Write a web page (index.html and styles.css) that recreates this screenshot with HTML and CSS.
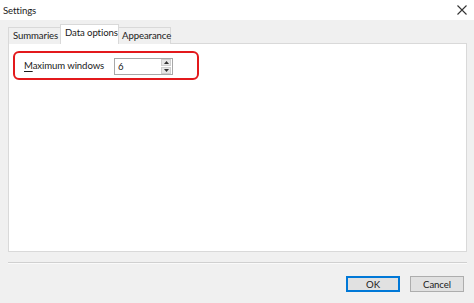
FILE: index.html
```html
<!DOCTYPE html>
<html>
<head>
<meta charset="utf-8">
<link rel="stylesheet" href="styles.css">
</head>
<body>
<div class="window">
  <div class="titlebar">
    <span class="title">Settings</span>
    <svg class="close" width="10" height="10" viewBox="0 0 10 10"><path d="M0.5 0.5L9.5 9.5M9.5 0.5L0.5 9.5" stroke="#333" stroke-width="1.1" fill="none"/></svg>
  </div>
  <div class="body">
    <div class="tabs">
      <div class="tab first">Summaries</div>
      <div class="tab active">Data options</div>
      <div class="tab">Appearance</div>
    </div>
    <div class="panel">
      <div class="highlight">
        <label class="label"><u>M</u>aximum windows</label>
        <div class="spin">
          <span class="value">6</span>
          <div class="spinbtns">
            <div class="sb"><svg width="5" height="3" viewBox="0 0 5 3"><path d="M0 3L2.5 0L5 3Z" fill="#333"/></svg></div>
            <div class="sb"><svg width="5" height="3" viewBox="0 0 5 3"><path d="M0 0L2.5 3L5 0Z" fill="#333"/></svg></div>
          </div>
        </div>
      </div>
    </div>
    <div class="separator"></div>
    <div class="buttons">
      <div class="btn default">OK</div>
      <div class="btn">Cancel</div>
    </div>
  </div>
</div>
</body>
</html>
```
FILE: styles.css
```css
html, body {
  margin: 0;
  padding: 0;
}
body {
  width: 474px;
  height: 303px;
  overflow: hidden;
  font-family: Lato, "Noto Sans", sans-serif;
  font-size: 9.6px;
  letter-spacing: -0.1px;
  color: #1a1a1a;
  white-space: nowrap;
}
.window {
  width: 474px;
  height: 303px;
  display: flex;
  flex-direction: column;
}
.titlebar {
  height: 20px;
  background: #fff;
  display: flex;
  align-items: center;
  justify-content: space-between;
  padding: 0 7px 0 3px;
  box-sizing: border-box;
}
.close {
  margin-top: -1px;
}
.body {
  flex: 1;
  background: #f0f0f0;
  padding: 4px 7px 0 8px;
  display: flex;
  flex-direction: column;
}
.tabs {
  display: flex;
  align-items: flex-end;
  height: 20px;
  margin-bottom: -1px;
  position: relative;
  z-index: 1;
}
.tab {
  height: 17px;
  box-sizing: border-box;
  border: 1px solid #d9d9d9;
  border-bottom: none;
  background: #f0f0f0;
  padding: 0 0 0 4px;
  display: flex;
  align-items: center;
  line-height: 1;
  margin-left: -1px;
}
.tab.first {
  margin-left: 0;
  width: 53px;
}
.tab.active {
  height: 20px;
  background: #fff;
  width: 59px;
  padding-bottom: 3px;
}
.tab:last-child {
  width: 53px;
  padding-left: 3px;
}
.panel {
  height: 209px;
  box-sizing: border-box;
  background: #fff;
  border: 1px solid #d9d9d9;
  padding: 7px 0 0 4px;
}
.highlight {
  width: 186px;
  height: 29px;
  box-sizing: border-box;
  border: 2px solid #e3191c;
  border-radius: 6px;
  display: flex;
  align-items: center;
  padding-left: 9px;
}
.label {
  width: 90px;
}
.label u {
  text-decoration-thickness: 1px;
  text-underline-offset: 2px;
}
.spin {
  width: 59px;
  height: 17px;
  box-sizing: border-box;
  border: 1px solid #a8a8a8;
  background: #fff;
  display: flex;
  align-items: center;
  justify-content: space-between;
  padding-left: 3px;
  margin-top: 1px;
}
.spinbtns {
  width: 10px;
  height: 15px;
  display: flex;
  flex-direction: column;
  gap: 1px;
  margin-right: 1px;
}
.sb {
  flex: 1;
  background: #e6e6e6;
  border: 1px solid #cfcfcf;
  box-sizing: border-box;
  display: flex;
  align-items: center;
  justify-content: center;
}
.separator {
  margin-top: 10px;
  height: 1px;
  background: #d0d0d0;
  border-bottom: 1px solid #fafafa;
}
.buttons {
  display: flex;
  justify-content: flex-end;
  gap: 10px;
  margin-top: 12px;
  padding-right: 3px;
}
.btn {
  width: 54px;
  height: 16px;
  box-sizing: border-box;
  background: #e1e1e1;
  border: 1px solid #adadad;
  display: flex;
  align-items: center;
  justify-content: center;
}
.btn.default {
  border: 2px solid #0078d7;
}
```
